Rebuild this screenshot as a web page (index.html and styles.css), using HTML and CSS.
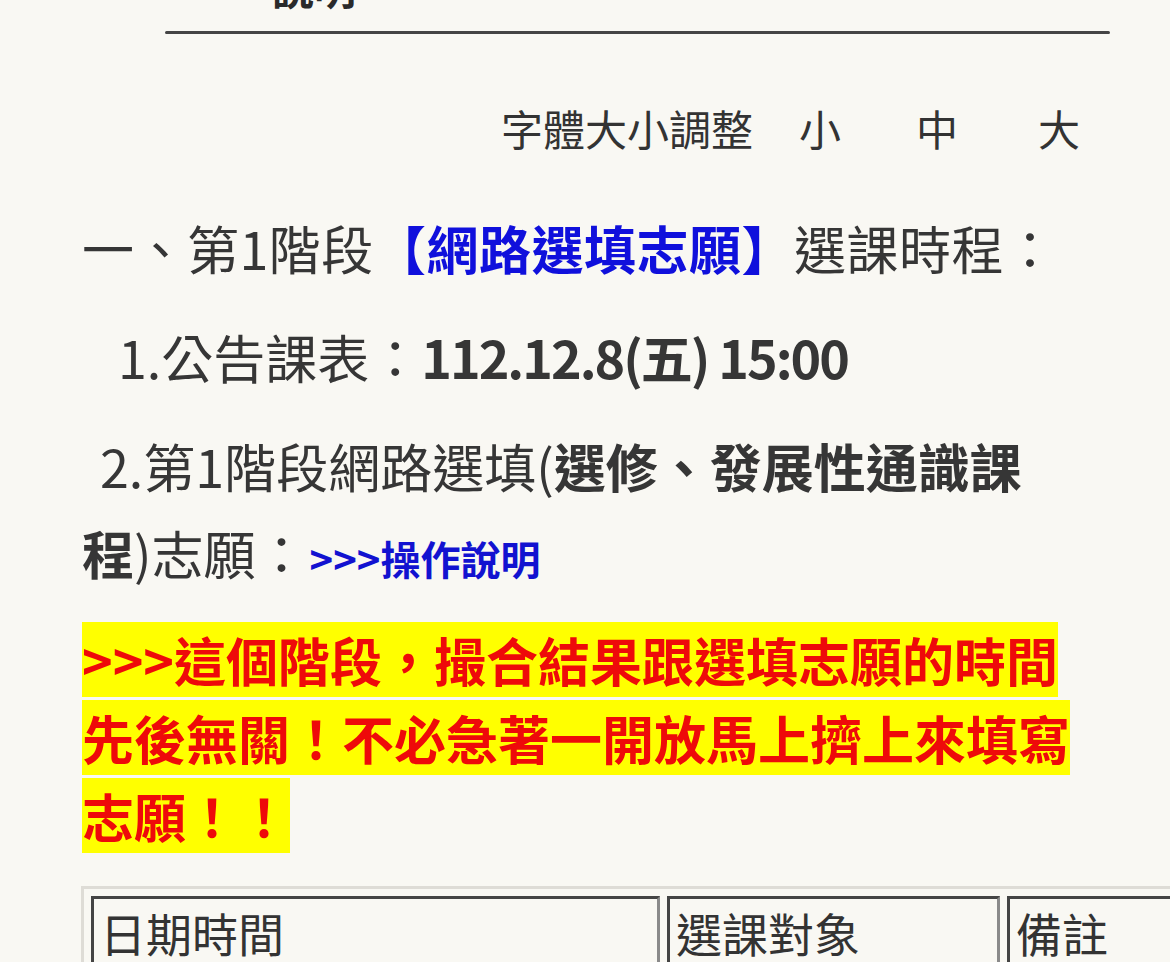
FILE: index.html
```html
<!DOCTYPE html>
<html lang="zh-Hant">
<head>
<meta charset="utf-8">
<title>說明</title>
<link rel="stylesheet" href="styles.css">
</head>
<body>
<div class="page">
  <div class="title">說明</div>
  <div class="rule"></div>
  <div class="fontsize">
    <span class="fs-label">字體大小調整</span>
    <span class="fs-opt fs-small">小</span>
    <span class="fs-opt fs-mid">中</span>
    <span class="fs-opt fs-large">大</span>
  </div>
  <div class="content">
    <p class="heading">一、第1階段<strong class="blue">【網路選填志願】</strong>選課時程：</p>
    <p class="item item1">1.公告課表：<b class="num">112.12.8(五) 15:00</b></p>
    <p class="item item2">2.第1階段網路選填(<b>選修、發展性通識課<br>程</b>)志願：<a class="link" href="#">&gt;&gt;&gt;操作說明</a></p>
    <p class="warn"><span class="mark">&gt;&gt;&gt;這個階段，撮合結果跟選填志願的時間先後無關！不必急著一開放馬上擠上來填寫志願！！</span></p>
    <table class="sched">
      <tr>
        <td class="c1">日期時間</td>
        <td class="c2">選課對象</td>
        <td class="c3">備註</td>
      </tr>
    </table>
  </div>
</div>
</body>
</html>
```

FILE: styles.css
```css
html, body {
  margin: 0;
  padding: 0;
  overflow: hidden;
  background: #f9f8f3;
}

body {
  font-family: "Noto Sans CJK TC", "Noto Sans", sans-serif;
  color: #363636;
}

.page {
  width: 1170px;
}

.title {
  margin: -37px 0 0 272px;
  font-size: 42px;
  line-height: 48px;
  font-weight: 700;
  color: #2a2a2a;
}

.rule {
  margin: 20px 0 0 165px;
  width: 945px;
  height: 0;
  border-top: 3px solid #454545;
  border-radius: 2px;
}

.fontsize {
  margin-top: 64px;
  display: flex;
  justify-content: flex-end;
  padding-right: 90px;
  font-size: 42px;
  line-height: 60px;
  color: #333;
}

.fs-small { margin-left: 46px; }
.fs-mid { margin-left: 75px; }
.fs-large { margin-left: 80px; }

.content {
  padding-left: 82px;
  width: 1000px;
}

.content p {
  margin: 0;
  font-size: 52px;
}

.heading {
  margin-top: 55px !important;
  line-height: 70px;
  letter-spacing: 0.5px;
}

.blue {
  color: #1010dc;
  font-weight: 700;
}

.item1 {
  margin-top: 39px !important;
  line-height: 70px;
  text-indent: 36px;
}

.item2 {
  margin-top: 30px !important;
  line-height: 87px;
  text-indent: 18px;
}

.item b {
  font-weight: 700;
}

.num {
  letter-spacing: -2px;
}

.link {
  color: #1212d0;
  font-weight: 700;
  font-size: 40px;
  text-decoration: none;
  margin-left: 2px;
}

.warn {
  margin-top: 19px !important;
  line-height: 78px;
  font-weight: 700;
  color: #ee0a0a;
}

.mark {
  background: #ffff00;
}

.sched {
  margin: 31px 0 0 -1px;
  width: 1236px;
  table-layout: fixed;
  border: 3px solid;
  border-color: #dedcd6 #b9b9b9 #b9b9b9 #dedcd6;
  border-spacing: 7px;
  border-collapse: separate;
}

.sched td {
  box-sizing: border-box;
  border: 3px solid;
  border-color: #444 #8a8a8a #8a8a8a #444;
  padding: 3px 6px 10px;
  font-size: 46px;
  line-height: 60px;
  color: #333;
  vertical-align: top;
}

.c1 { width: 569px; }
.c2 { width: 333px; }
.c3 { width: 300px; }
```
